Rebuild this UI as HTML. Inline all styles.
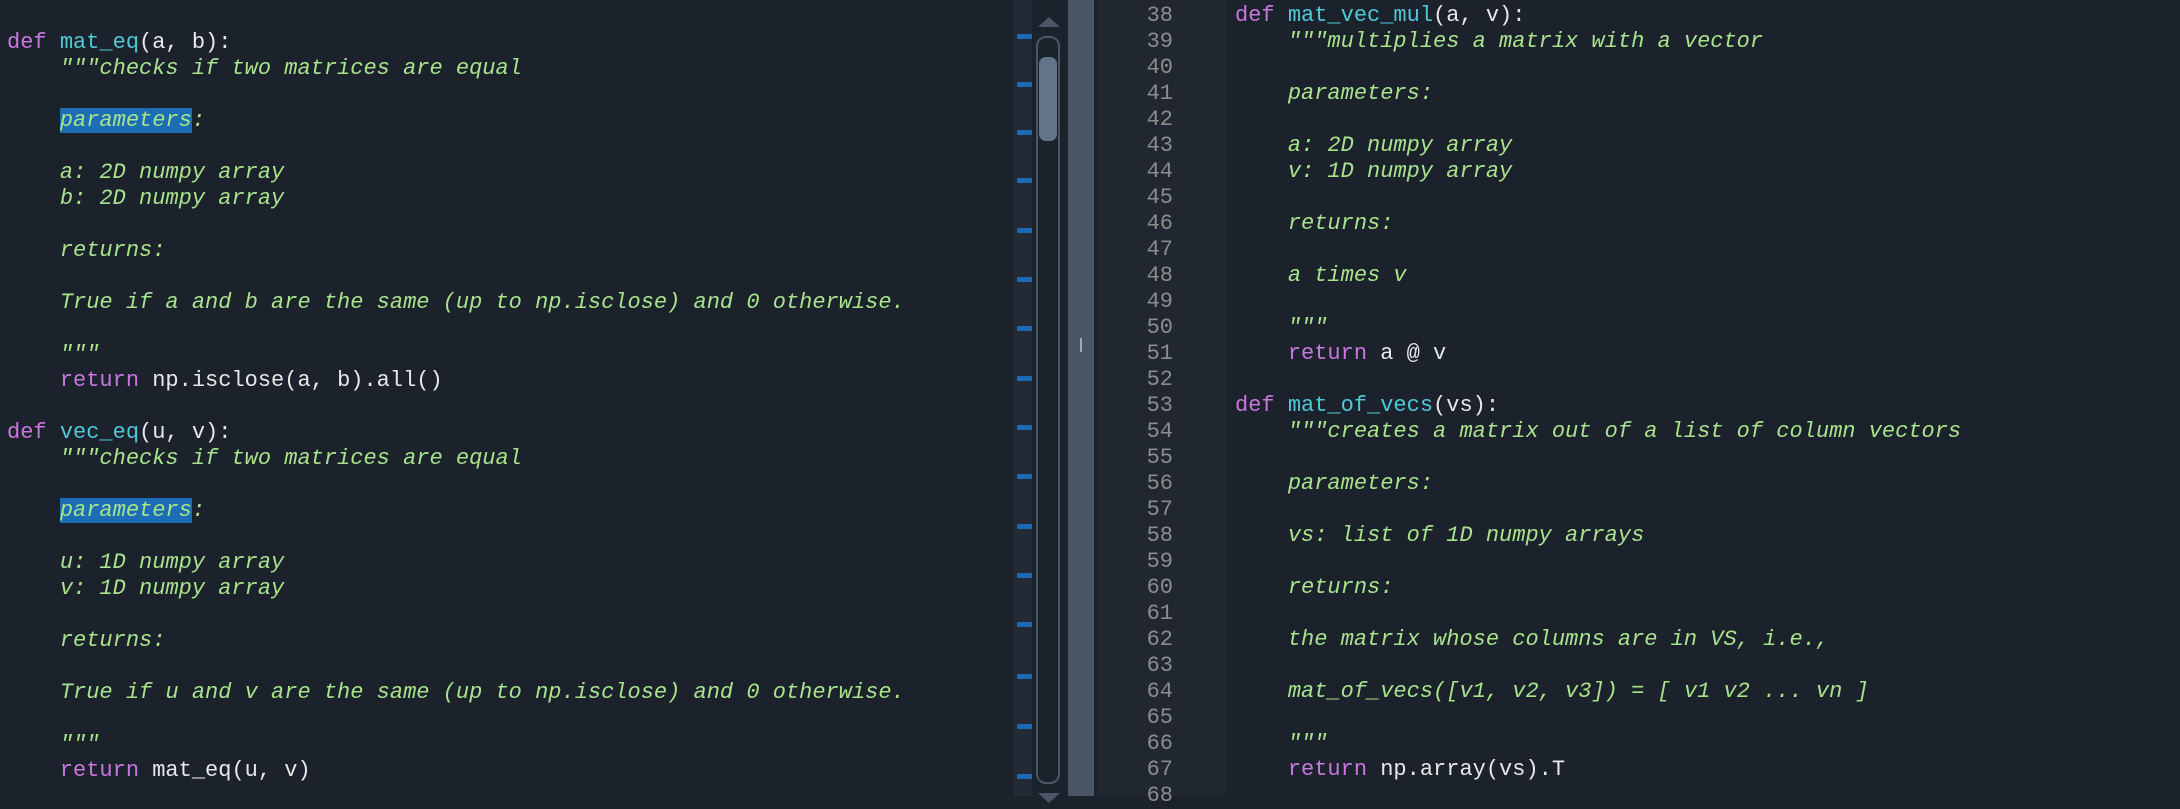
<!DOCTYPE html>
<html><head><meta charset="utf-8"><style>
*{margin:0;padding:0;box-sizing:border-box}
body{width:2180px;height:796px;background:#1b222c;overflow:hidden;position:relative;font-family:"Liberation Mono",monospace;font-size:22px;color:#e8e8e8}
.code{position:absolute;white-space:pre;line-height:26px}
.k{color:#c877dd}.f{color:#4fc8d8}.s{color:#a8e38c;font-style:italic}
.hl{background:#1b6db6}
.gut{position:absolute;left:1098px;top:0;width:128px;height:796px;background:#212731}
.num{position:absolute;left:1098px;width:75px;text-align:right;top:3px;white-space:pre;line-height:26px;color:#8c8c8c}
.mm{position:absolute;left:1014px;top:0;width:18px;height:796px;background:#232a35}
.mk{position:absolute;left:1017px;width:15px;height:5px;background:#1d6ab4;border-radius:1px}
.sb{position:absolute;left:1036px;top:36px;width:24px;height:748px;border:2px solid #4a5566;border-radius:10px;background:#1a222c}
.th{position:absolute;left:1039px;top:57px;width:18px;height:84px;background:#637488;border-radius:7px}
.sp{position:absolute;left:1068px;top:0;width:26px;height:796px;background:#4a5566}
</style></head><body>
<div class="mm"></div>
<div class="mk" style="top:34px"></div><div class="mk" style="top:82px"></div><div class="mk" style="top:130px"></div><div class="mk" style="top:178px"></div><div class="mk" style="top:228px"></div><div class="mk" style="top:277px"></div><div class="mk" style="top:326px"></div><div class="mk" style="top:376px"></div><div class="mk" style="top:425px"></div><div class="mk" style="top:474px"></div><div class="mk" style="top:524px"></div><div class="mk" style="top:573px"></div><div class="mk" style="top:622px"></div><div class="mk" style="top:674px"></div><div class="mk" style="top:724px"></div><div class="mk" style="top:774px"></div>
<div class="sb"></div><div class="th"></div>
<div style="position:absolute;left:1038px;top:17px;width:0;height:0;border-left:11px solid transparent;border-right:11px solid transparent;border-bottom:10px solid #4a5566"></div>
<div style="position:absolute;left:1038px;top:793px;width:0;height:0;border-left:11px solid transparent;border-right:11px solid transparent;border-top:10px solid #4a5566"></div>
<div class="sp"></div>
<div style="position:absolute;left:1080px;top:338px;width:2px;height:14px;background:#a0a8b0"></div>
<div class="gut"></div>
<div class="code" style="left:7px;top:30px"><span class="k">def</span> <span class="f">mat_eq</span>(a, b):
    <span class="s">"""checks if two matrices are equal</span>

    <span class="s"><span class="hl">parameters</span>:</span>

    <span class="s">a: 2D numpy array</span>
    <span class="s">b: 2D numpy array</span>

    <span class="s">returns:</span>

    <span class="s">True if a and b are the same (up to np.isclose) and 0 otherwise.</span>

    <span class="s">"""</span>
    <span class="k">return</span> np.isclose(a, b).all()

<span class="k">def</span> <span class="f">vec_eq</span>(u, v):
    <span class="s">"""checks if two matrices are equal</span>

    <span class="s"><span class="hl">parameters</span>:</span>

    <span class="s">u: 1D numpy array</span>
    <span class="s">v: 1D numpy array</span>

    <span class="s">returns:</span>

    <span class="s">True if u and v are the same (up to np.isclose) and 0 otherwise.</span>

    <span class="s">"""</span>
    <span class="k">return</span> mat_eq(u, v)</div>
<div class="num">38
39
40
41
42
43
44
45
46
47
48
49
50
51
52
53
54
55
56
57
58
59
60
61
62
63
64
65
66
67
68</div>
<div class="code" style="left:1235px;top:3px"><span class="k">def</span> <span class="f">mat_vec_mul</span>(a, v):
    <span class="s">"""multiplies a matrix with a vector</span>

    <span class="s">parameters:</span>

    <span class="s">a: 2D numpy array</span>
    <span class="s">v: 1D numpy array</span>

    <span class="s">returns:</span>

    <span class="s">a times v</span>

    <span class="s">"""</span>
    <span class="k">return</span> a @ v

<span class="k">def</span> <span class="f">mat_of_vecs</span>(vs):
    <span class="s">"""creates a matrix out of a list of column vectors</span>

    <span class="s">parameters:</span>

    <span class="s">vs: list of 1D numpy arrays</span>

    <span class="s">returns:</span>

    <span class="s">the matrix whose columns are in VS, i.e.,</span>

    <span class="s">mat_of_vecs([v1, v2, v3]) = [ v1 v2 ... vn ]</span>

    <span class="s">"""</span>
    <span class="k">return</span> np.array(vs).T</div>
</body></html>
